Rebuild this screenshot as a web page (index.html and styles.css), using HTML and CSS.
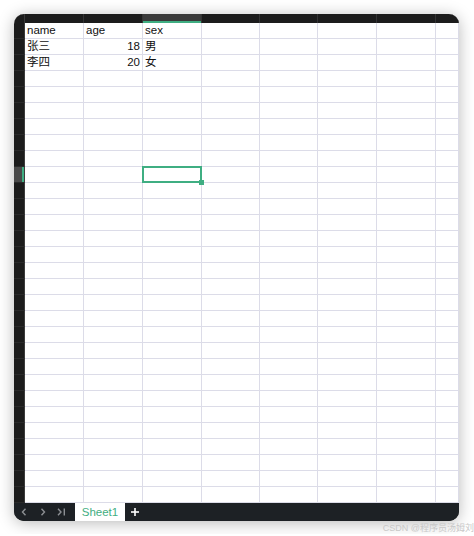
FILE: index.html
```html
<!DOCTYPE html>
<html lang="en">
<head>
    <meta charset="UTF-8">
    <meta name="viewport" content="width=device-width, initial-scale=1.0">
    <link rel="stylesheet" href="styles.css">
</head>
<body>
    <div class="book">
        <div class="sheet" id="sheet"></div>
        <div class="tab-bar">
            <div class="nav">
                <span class="nav-btn">
                    <svg width="6" height="8" viewBox="0 0 6 8"><polyline points="4.5,0.8 1.5,4 4.5,7.2" fill="none" stroke="#8c8f93" stroke-width="1.4"/></svg>
                </span>
                <span class="nav-btn">
                    <svg width="6" height="8" viewBox="0 0 6 8"><polyline points="1.5,0.8 4.5,4 1.5,7.2" fill="none" stroke="#8c8f93" stroke-width="1.4"/></svg>
                </span>
                <span class="nav-btn">
                    <svg width="9" height="8" viewBox="0 0 9 8"><polyline points="1,0.8 4,4 1,7.2" fill="none" stroke="#8c8f93" stroke-width="1.4"/><line x1="7.3" y1="0.5" x2="7.3" y2="7.5" stroke="#8c8f93" stroke-width="1.4"/></svg>
                </span>
            </div>
            <div class="sheet-tab">Sheet1</div>
            <span class="add-sheet">
                <svg width="8" height="8" viewBox="0 0 8 8"><line x1="4" y1="0" x2="4" y2="8" stroke="#fff" stroke-width="1.6"/><line x1="0" y1="4" x2="8" y2="4" stroke="#fff" stroke-width="1.6"/></svg>
            </span>
        </div>
    </div>
    <div class="watermark">CSDN @程序员汤姆刘</div>
    <script>
        // sheet contents
        var data = [
            ['name', 'age', 'sex'],
            ['张三', 18, '男'],
            ['李四', 20, '女']
        ];
        var letters = 'ABCDEFGH';
        var rows = 30;
        var selRow = 9, selCol = 2;
        var sheet = document.getElementById('sheet');

        function cell(cls, text) {
            var d = document.createElement('div');
            d.className = cls;
            if (text !== undefined) d.textContent = text;
            sheet.appendChild(d);
            return d;
        }

        // column headers (the top of the window is cropped)
        cell('corner');
        for (var c = 0; c < letters.length; c++) {
            var h = cell('col-head' + (c === selCol ? ' active' : ''));
            var s = document.createElement('span');
            s.textContent = letters[c];
            h.appendChild(s);
        }

        // rows
        for (var r = 0; r < rows; r++) {
            cell('row-head' + (r === selRow ? ' active' : ''));
            for (var c = 0; c < letters.length; c++) {
                var v = data[r] ? data[r][c] : undefined;
                var cls = 'cell';
                if (typeof v === 'number') cls += ' num';
                if (r === selRow && c === selCol) cls += ' selected';
                cell(cls, v);
            }
        }
    </script>
</body>
</html>
```

FILE: styles.css
```css
body {
    background-color: #fff;
    font-family: "Liberation Sans", Arial, "Noto Sans CJK SC", sans-serif;
    margin: 0;
    padding: 0;
}
.book {
    display: flex;
    flex-direction: column;
    width: 445px;
    height: 507px;
    margin: 14px 0 0 14px;
    border-radius: 10px;
    overflow: hidden;
    background-color: #1c1c1c;
    box-shadow: 0 2px 16px rgba(0,0,0,0.28);
}
.sheet {
    flex: 1;
    display: grid;
    grid-template-columns: 11px 59px 59px 59px 58px 58px 59px 59px 1fr;
    grid-template-rows: 9px;
    grid-auto-rows: 16px;
    overflow: hidden;
    background-color: #fff;
}
.corner, .col-head, .row-head {
    background-color: #1c1c1c;
    box-sizing: border-box;
}
.corner {
    border-right: 1px solid #3a3a3a;
}
.col-head {
    border-right: 1px solid #343434;
    overflow: hidden;
    text-align: center;
    font-size: 11px;
    color: #8a8a8a;
}
.col-head span {
    display: block;
    line-height: 14px;
    margin-top: -11px;
}
.col-head.active {
    background-color: #3a3a3a;
    color: #3fae82;
    box-shadow: inset 0 -2px 0 #3fae82;
}
.row-head {
    border-right: 1px solid #3c3c3c;
    border-bottom: 1px solid #2a2a2a;
}
.row-head.active {
    background-color: #4a4a4a;
    box-shadow: inset -2px 0 0 #3fae82;
}
.cell {
    box-sizing: border-box;
    border-right: 1px solid #dcdce8;
    border-bottom: 1px solid #dcdce8;
    padding: 0 2px;
    font-size: 11.5px;
    line-height: 15px;
    color: #111;
    white-space: nowrap;
    overflow: hidden;
}
.cell.num {
    text-align: right;
}
.cell.selected {
    position: relative;
    overflow: visible;
}
.cell.selected::after {
    content: "";
    position: absolute;
    top: -1px;
    left: -1px;
    right: -1px;
    bottom: -1px;
    border: 2px solid #3fae82;
}
.cell.selected::before {
    content: "";
    position: absolute;
    right: -3px;
    bottom: -3px;
    width: 5px;
    height: 5px;
    background-color: #3fae82;
    z-index: 1;
}
.tab-bar {
    display: flex;
    align-items: stretch;
    height: 18px;
    background-color: #1d2125;
}
.nav {
    display: flex;
}
.nav-btn {
    display: flex;
    align-items: center;
    justify-content: center;
    width: 19px;
}
.sheet-tab {
    width: 50px;
    margin-left: 4px;
    background-color: #fff;
    color: #3fae82;
    font-size: 11.5px;
    line-height: 18px;
    text-align: center;
}
.add-sheet {
    display: flex;
    align-items: center;
    padding: 0 6px;
}
.watermark {
    margin-top: 1px;
    text-align: right;
    font-size: 9px;
    line-height: 12px;
    color: #c8c8c8;
    white-space: nowrap;
}
```
